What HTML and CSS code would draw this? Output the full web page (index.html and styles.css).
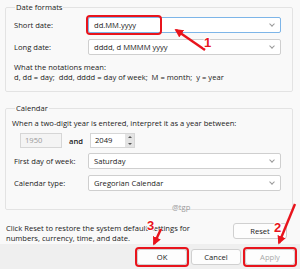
FILE: index.html
```html
<!DOCTYPE html>
<html lang="en">
<head>
  <meta charset="UTF-8">
  <title>Customize Format - Date</title>
  <link rel="stylesheet" href="styles.css">
</head>
<body>
  <div class="dialog">
    <div class="content">
      <fieldset class="group group-formats">
        <legend>Date formats</legend>
        <div class="row">
          <span class="label">Short date:</span>
          <div class="combo focused">dd.MM.yyyy<span class="chev"></span></div>
        </div>
        <div class="row">
          <span class="label">Long date:</span>
          <div class="combo">dddd, d MMMM yyyy<span class="chev"></span></div>
        </div>
        <div class="notes">
          <div>What the notations mean:</div>
          <div>d, dd = day;&nbsp; ddd, dddd = day of week;&nbsp; M = month;&nbsp; y = year</div>
        </div>
      </fieldset>

      <fieldset class="group group-calendar">
        <legend>Calendar</legend>
        <div class="intro">When a two-digit year is entered, interpret it as a year between:</div>
        <div class="years">
          <div class="year-box disabled">1950</div>
          <span class="and">and</span>
          <div class="year-box spin">2049
            <span class="spinner"><span class="up"></span><span class="down"></span></span>
          </div>
        </div>
        <div class="row">
          <span class="label">First day of week:</span>
          <div class="combo">Saturday<span class="chev"></span></div>
        </div>
        <div class="row">
          <span class="label">Calendar type:</span>
          <div class="combo">Gregorian Calendar<span class="chev"></span></div>
        </div>
        <div class="watermark">@tgp</div>
      </fieldset>

      <div class="reset-row">
        <div class="reset-text">Click Reset to restore the system default settings for<br>numbers, currency, time, and date.</div>
        <button class="btn reset-btn">Reset</button>
      </div>
    </div>

    <div class="footer">
      <button class="btn marked">OK</button>
      <button class="btn">Cancel</button>
      <button class="btn marked disabled">Apply</button>
    </div>
  </div>

  <svg class="marks" width="300" height="269" viewBox="0 0 300 269">
    <defs>
      <marker id="head" viewBox="0 0 10 10" refX="8" refY="5" markerWidth="3.6" markerHeight="3.6" orient="auto">
        <path d="M0 0 L10 5 L0 10 Z" fill="#e8141c"/>
      </marker>
    </defs>
    <line x1="205" y1="50" x2="176" y2="30" stroke="#e8141c" stroke-width="2.4" marker-end="url(#head)"/>
    <line x1="295" y1="204" x2="279" y2="243" stroke="#e8141c" stroke-width="2.4" marker-end="url(#head)"/>
    <line x1="161" y1="229" x2="154" y2="244" stroke="#e8141c" stroke-width="2.4" marker-end="url(#head)"/>
    <text x="204" y="47" class="num">1</text>
    <text x="274" y="232" class="num">2</text>
    <text x="147" y="230" class="num">3</text>
  </svg>
</body>
</html>
```

FILE: styles.css
```css
body {
  margin: 0;
  width: 300px;
  height: 269px;
  overflow: hidden;
  background: #f9f9f9;
  font-family: 'Open Sans', 'Noto Sans', Arial, sans-serif;
  font-size: 7.6px;
  color: #1a1a1a;
  position: relative;
}
.dialog {
  display: flex;
  flex-direction: column;
  height: 269px;
}
.content {
  flex: 1;
  padding: 2px 7px 0 5px;
}
.group {
  margin: 0;
  border: 1px solid #e3e3e3;
  border-radius: 2px;
  padding: 0 11px 0 8px;
}
.group legend {
  padding: 0 1px;
  margin-left: 1px;
  line-height: 10px;
}
.group-formats {
  height: 83px;
  padding-top: 5px;
}
.group-calendar {
  margin-top: 11px;
  height: 100px;
  padding-top: 5px;
  position: relative;
}
.row {
  display: flex;
  align-items: center;
  height: 16px;
  margin-bottom: 6px;
}
.label {
  width: 74px;
  flex: none;
}
.combo {
  flex: 1;
  height: 14px;
  line-height: 14px;
  background: #fff;
  border: 1px solid #cfcfcf;
  border-radius: 2px;
  padding-left: 5px;
  position: relative;
}
.combo.focused {
  border-color: #7db5e8;
}
.combo.focused::before {
  content: "";
  position: absolute;
  left: -3px;
  top: -3px;
  width: 72px;
  height: 16px;
  border: 2px solid #e8141c;
  border-radius: 4px;
}
.chev {
  position: absolute;
  right: 6px;
  top: 4px;
  width: 3px;
  height: 3px;
  border-right: 1px solid #999;
  border-bottom: 1px solid #999;
  transform: rotate(45deg);
}
.notes {
  margin-top: 7px;
  line-height: 10px;
}
.intro {
  margin-left: -2px;
  line-height: 10px;
}
.years {
  display: flex;
  align-items: center;
  margin: 5px 0 5px 6px;
  height: 15px;
}
.year-box {
  width: 36px;
  height: 13px;
  line-height: 13px;
  padding-left: 4px;
  border: 1px solid #d6d6d6;
  background: #fff;
  position: relative;
}
.year-box.disabled {
  color: #9a9a9a;
  background: #f4f4f4;
}
.and {
  width: 28px;
  text-align: center;
  font-weight: 600;
}
.year-box.spin {
  width: 39px;
}
.spinner {
  position: absolute;
  right: 0;
  top: 0;
  width: 9px;
  height: 13px;
  background: #e4e4e4;
  display: flex;
  flex-direction: column;
  align-items: center;
  justify-content: space-around;
}
.spinner .up, .spinner .down {
  width: 0;
  height: 0;
  border-left: 2px solid transparent;
  border-right: 2px solid transparent;
}
.spinner .up { border-bottom: 2px solid #555; }
.spinner .down { border-top: 2px solid #555; }
.watermark {
  position: absolute;
  left: 166px;
  top: 89px;
  color: #9a9a9a;
}
.reset-row {
  display: flex;
  align-items: flex-start;
  justify-content: space-between;
  margin-top: 13px;
  padding-left: 1px;
}
.reset-text {
  line-height: 10px;
}
.btn {
  font-family: inherit;
  font-size: 7.6px;
  color: #1a1a1a;
  background: #fdfdfd;
  border: 1px solid #d0d0d0;
  border-radius: 3px;
  height: 16px;
  padding: 0;
  position: relative;
}
.reset-btn {
  width: 54px;
  margin-right: 6px;
}
.footer {
  height: 24px;
  background: #efefef;
  display: flex;
  justify-content: flex-end;
  align-items: center;
  gap: 4px;
  padding: 1px 5px 0 0;
}
.footer .btn {
  width: 50px;
}
.btn.marked::after {
  content: "";
  position: absolute;
  left: -3px;
  top: -3px;
  right: -3px;
  bottom: -3px;
  border: 2px solid #e8141c;
  border-radius: 4px;
}
.btn.disabled {
  color: #a8a8a8;
}
.marks {
  position: absolute;
  left: 0;
  top: 0;
  pointer-events: none;
}
.num {
  font-family: 'Liberation Sans', Arial, sans-serif;
  font-weight: bold;
  font-size: 13px;
  fill: #e8141c;
  stroke: #fff;
  stroke-width: 2px;
  paint-order: stroke;
}
```
